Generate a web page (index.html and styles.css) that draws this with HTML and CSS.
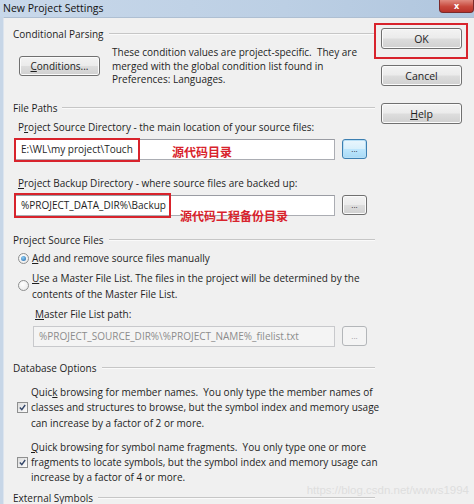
FILE: index.html
```html
<!DOCTYPE html>
<html lang="en">
<head>
    <meta charset="utf-8" />
    <link rel="stylesheet" href="styles.css">
</head>
<body>
    <div class="window">
        <div class="titlebar">
            <span class="title">New Project Settings</span>
            <span class="close-btn">x</span>
        </div>
        <div class="client">
            <div class="main">
                <div class="group-head">Conditional Parsing</div>
                <div class="cond-row">
                    <button class="btn cond-btn"><u>C</u>onditions...</button>
                    <p class="cond-text">These condition values are project-specific.&nbsp; They are<br>merged with the global condition list found in<br>Preferences: Languages.</p>
                </div>

                <div class="group-head gh-paths">File Paths</div>
                <div class="field-label label-src">P<u>r</u>oject Source Directory - the main location of your source files:</div>
                <div class="path-row row-src">
                    <div class="input">E:\WL\my project\Touch</div>
                    <button class="btn browse focused">...</button>
                    <span class="mark mark-src"></span>
                    <span class="note note-src">源代码目录</span>
                </div>
                <div class="field-label label-bak"><u>P</u>roject Backup Directory - where source files are backed up:</div>
                <div class="path-row row-bak">
                    <div class="input">%PROJECT_DATA_DIR%\Backup</div>
                    <button class="btn browse">...</button>
                    <span class="mark mark-bak"></span>
                    <span class="note note-bak">源代码工程备份目录</span>
                </div>

                <div class="group-head gh-files">Project Source Files</div>
                <div class="option opt-add">
                    <span class="radio checked"></span>
                    <span class="opt-text"><u>A</u>dd and remove source files manually</span>
                </div>
                <div class="option opt-master">
                    <span class="radio"></span>
                    <span class="opt-text"><u>U</u>se a Master File List. The files in the project will be determined by the<br>contents of the Master File List.</span>
                </div>
                <div class="field-label label-master"><u>M</u>aster File List path:</div>
                <div class="path-row row-master">
                    <div class="input disabled">%PROJECT_SOURCE_DIR%\%PROJECT_NAME%_filelist.txt</div>
                    <button class="btn browse disabled">...</button>
                </div>

                <div class="group-head gh-db">Database Options</div>
                <div class="option check-row cr-member">
                    <span class="checkbox">
                        <svg width="7" height="7" viewBox="0 0 7 7"><path d="M0.8 3.6 L2.8 5.6 L6.2 1" fill="none" stroke="#34476a" stroke-width="1.4"/></svg>
                    </span>
                    <span class="opt-text">Quic<u>k</u> browsing for member names.&nbsp; You only type the member names of<br>classes and structures to browse, but the symbol index and memory usage<br>can increase by a factor of 2 or more.</span>
                </div>
                <div class="option check-row cr-frag">
                    <span class="checkbox">
                        <svg width="7" height="7" viewBox="0 0 7 7"><path d="M0.8 3.6 L2.8 5.6 L6.2 1" fill="none" stroke="#34476a" stroke-width="1.4"/></svg>
                    </span>
                    <span class="opt-text"><u>Q</u>uick browsing for symbol name fragments.&nbsp; You only type one or more<br>fragments to locate symbols, but the symbol index and memory usage can<br>increase by a factor of 4 or more.</span>
                </div>

                <div class="group-head gh-ext">External Symbols</div>
            </div>

            <div class="side">
                <div class="ok-wrap">
                    <button class="btn side-btn">OK</button>
                    <span class="mark mark-ok"></span>
                </div>
                <button class="btn side-btn btn-cancel">Cancel</button>
                <button class="btn side-btn btn-help"><u>H</u>elp</button>
            </div>
        </div>
        <div class="watermark">https://blog.csdn.net/wwws1994</div>
    </div>
</body>
</html>
```

FILE: styles.css
```css
:root {
    --face: #f0f0f0;
    --text: #1e1e1e;
    --line: #c6c6c6;
    --mark-red: #d8232c;
    --frame: #c7d6e7;
}

body {
    margin: 0;
    font-family: 'Open Sans', 'Noto Sans', sans-serif;
    font-size: 10px;
    color: var(--text);
    background: var(--face);
}

.window {
    position: relative;
    width: 474px;
    height: 504px;
    overflow: hidden;
    background: var(--frame);
}

.titlebar {
    height: 17px;
    display: flex;
    align-items: flex-start;
    justify-content: space-between;
    background: linear-gradient(to right, #c8d8ea, #bccfe4 60%, #b0c6de);
}

.title {
    font-size: 10.5px;
    line-height: 16px;
    padding-left: 3px;
    color: #111;
}

.close-btn {
    width: 35px;
    height: 13px;
    border: 1px solid #7a2a2a;
    border-top: none;
    border-radius: 0 0 4px 4px;
    background: linear-gradient(#e08a7f, #c8483c 55%, #b8322a);
    color: #fff;
    font-weight: bold;
    font-size: 9px;
    line-height: 11px;
    text-align: center;
    box-sizing: border-box;
}

.client {
    display: flex;
    height: 487px;
    margin-left: 3px;
    border-left: 1px solid #dce4ee;
    border-top: 1px solid #aebfd2;
    background: var(--face);
    box-sizing: border-box;
}

.main {
    width: 371px;
    flex-shrink: 0;
    padding-left: 9px;
    padding-top: 9px;
    box-sizing: border-box;
}

.group-head {
    display: flex;
    align-items: center;
    line-height: 14px;
    height: 14px;
}

.group-head::after {
    content: "";
    flex: 1;
    margin-left: 5px;
    border-top: 1px solid var(--line);
    border-bottom: 1px solid #fafafa;
}

.cond-row {
    display: flex;
    margin-top: 5px;
}

.cond-text {
    margin: 0 0 0 12px;
    line-height: 13.5px;
    white-space: nowrap;
}

.btn {
    font-family: inherit;
    font-size: 10px;
    color: var(--text);
    border: 1px solid #707070;
    border-radius: 3px;
    background: linear-gradient(#f3f3f3, #ebebeb 48%, #dddddd 52%, #d0d0d0);
    padding: 0;
    box-shadow: inset 0 0 0 1px #fbfbfb;
}

.cond-btn {
    width: 81px;
    height: 20px;
    margin-top: 10px;
    margin-left: 6px;
    flex-shrink: 0;
}

.gh-paths {
    margin-top: 14px;
}

.field-label {
    line-height: 14px;
    margin-left: 5px;
    white-space: nowrap;
}

.label-src {
    margin-top: 5px;
}

.label-bak {
    margin-top: 16px;
}

.path-row {
    position: relative;
    display: flex;
    align-items: center;
    margin-left: 2px;
    margin-top: 5px;
}

.input {
    width: 320px;
    height: 21px;
    box-sizing: border-box;
    border: 1px solid #abadb3;
    border-top-color: #9a9ca3;
    background: #fff;
    line-height: 19px;
    padding-left: 5px;
    white-space: nowrap;
    overflow: hidden;
}

.input.disabled {
    background: #f4f4f4;
    border-color: #c8c9cc;
    color: #8c8c8c;
}

.browse {
    width: 25px;
    height: 20px;
    margin-left: 7px;
    font-size: 8px;
    line-height: 10px;
}

.browse.focused {
    border-color: #3c7fb1;
    background: linear-gradient(#eaf6fd, #d9f0fc 48%, #bee6fd 52%, #a7d9f5);
    box-shadow: inset 0 0 0 1px #b8dff6;
}

.browse.disabled {
    border-color: #b3b6b9;
    background: #f4f4f4;
    color: #9a9a9a;
    box-shadow: none;
}

.mark {
    position: absolute;
    border: 2px solid var(--mark-red);
    box-sizing: border-box;
}

.mark-src {
    left: -1px;
    top: -1px;
    width: 126px;
    height: 24px;
}

.mark-bak {
    left: -1px;
    top: -2px;
    width: 157px;
    height: 25px;
}

.note {
    position: absolute;
    color: var(--mark-red);
    font-family: 'Noto Sans CJK SC', sans-serif;
    font-weight: bold;
    font-size: 12px;
    line-height: 16px;
    white-space: nowrap;
}

.note-src {
    left: 157px;
    top: 5px;
}

.note-bak {
    left: 165px;
    top: 13px;
}

.gh-files {
    margin-top: 17px;
}

.option {
    display: flex;
    align-items: center;
    margin-left: 5px;
}

.opt-text {
    margin-left: 3px;
    white-space: nowrap;
}

.opt-add {
    margin-top: 4px;
    line-height: 15px;
}

.opt-master {
    margin-top: 4px;
    line-height: 16px;
}

.radio {
    width: 9px;
    height: 9px;
    flex-shrink: 0;
    border: 1px solid #8e8f8f;
    border-radius: 50%;
    background: radial-gradient(circle at 40% 35%, #fff, #e6e6e6);
    position: relative;
}

.radio.checked::after {
    content: "";
    position: absolute;
    left: 2px;
    top: 2px;
    width: 5px;
    height: 5px;
    border-radius: 50%;
    background: radial-gradient(circle at 40% 35%, #8fd0f6, #1e63a8);
}

.label-master {
    margin-left: 22px;
    margin-top: 5px;
}

.row-master {
    margin-left: 20px;
}

.row-master .input {
    width: 302px;
}

.gh-db {
    margin-top: 14px;
}

.check-row {
    margin-left: 4px;
    line-height: 15.5px;
}

.cr-member {
    margin-top: 10px;
}

.cr-frag {
    margin-top: 9px;
    line-height: 15px;
}

.checkbox {
    width: 9px;
    height: 9px;
    flex-shrink: 0;
    border: 1px solid #8e8f8f;
    background: linear-gradient(135deg, #dcdcdc, #fdfdfd);
    display: flex;
    align-items: center;
    justify-content: center;
}

.check-row .opt-text {
    margin-left: 3px;
}

.gh-ext {
    margin-top: 6px;
}

.side {
    display: flex;
    flex-direction: column;
    padding-top: 10px;
    margin-left: 6px;
}

.ok-wrap {
    position: relative;
}

.side-btn {
    width: 81px;
    height: 21px;
    font-size: 10.5px;
}

.mark-ok {
    left: -7px;
    top: -5px;
    width: 94px;
    height: 36px;
}

.btn-cancel {
    margin-top: 16px;
}

.btn-help {
    margin-top: 17px;
}

.watermark {
    position: absolute;
    right: 5px;
    bottom: 8px;
    font-family: 'Liberation Sans', sans-serif;
    font-size: 11.5px;
    color: #dedede;
}
```
